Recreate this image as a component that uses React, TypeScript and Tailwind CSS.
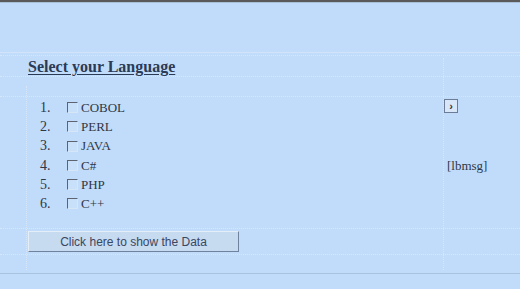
const languages = ["COBOL", "PERL", "JAVA", "C#", "PHP", "C++"];

function Check() {
  return (
    <span className="inline-block w-[11px] h-[11px] border-t border-l border-[#5d6470] border-b border-r border-b-[#d7e6f7] border-r-[#d7e6f7] bg-[#c9e0fa]" />
  );
}

export default function App() {
  return (
    <div className="w-[520px] h-[289px] bg-[#c1dcfb] overflow-hidden font-['Liberation_Serif',serif] text-[#2f3644]">
      <div className="h-[2px] bg-[#5a5a5a]" />
      <div className="h-px bg-[#aac0d8]" />
      <div className="h-[49px]" />
      <div className="h-px bg-[#d2e4f9]" />
      <div className="h-[2px]" />

      {/* title row */}
      <div className="flex h-[21px] border-t border-dotted border-[#d9e6f6]">
        <div className="w-[443px] pl-[28px] pt-[2px] flex items-start">
          <span className="text-[16px] font-bold underline underline-offset-2 text-[#2b3a55] leading-[17px]">
            Select your Language
          </span>
        </div>
        <div className="flex-1 mt-[2px] border-l border-dotted border-[#d9e6f6]" />
      </div>

      {/* spacer row */}
      <div className="flex h-[20px] border-t border-dotted border-[#d9e6f6]">
        <div className="w-[26px]" />
        <div className="w-[417px] mt-[9px] border-l border-dotted border-[#d9e6f6]" />
        <div className="flex-1 border-l border-dotted border-[#d9e6f6]" />
      </div>

      {/* list row */}
      <div className="flex h-[132px] border-t border-dotted border-[#d9e6f6]">
        <div className="w-[26px]" />
        <div className="w-[417px] border-l border-dotted border-[#d9e6f6] pt-[1px]">
          <ol className="text-[13px] leading-[19.2px]">
            {languages.map((lang, i) => (
              <li key={lang} className="flex items-center">
                <span className="w-[40px] pl-[13px] text-[14px]">{i + 1}.</span>
                <span className="w-[14px] flex items-center">
                  <Check />
                </span>
                <span>{lang}</span>
              </li>
            ))}
          </ol>
        </div>
        <div className="flex-1 border-l border-dotted border-[#d9e6f6] pt-[2px]">
          <div className="w-[14px] h-[14px] border border-[#6c7c96] bg-[#d7e6f8] flex items-center justify-center text-[11px] leading-none font-bold font-['Liberation_Sans',sans-serif] text-[#333]">
            ›
          </div>
          <div className="mt-[43px] pl-[3px] text-[13px] leading-[19px]">[lbmsg]</div>
        </div>
      </div>

      {/* button row */}
      <div className="flex h-[27px] border-t border-b border-dotted border-[#d9e6f6]">
        <div className="w-[26px]" />
        <div className="w-[417px] border-l border-dotted border-[#d9e6f6] pl-[1px] pt-[2px] flex items-start">
          <button className="w-[211px] h-[21px] bg-[#c6daf0] border border-[#e4eef9] border-r-[#6f829e] border-b-[#6f829e] font-['Liberation_Sans',sans-serif] text-[12px] text-[#3a4761] leading-none">
            Click here to show the Data
          </button>
        </div>
        <div className="flex-1 border-l border-dotted border-[#d9e6f6]" />
      </div>

      <div className="flex h-[18px]">
        <div className="w-[26px]" />
        <div className="w-[417px] mb-[3px] border-l border-dotted border-[#d9e6f6]" />
        <div className="flex-1 mb-[3px] border-l border-dotted border-[#d9e6f6]" />
      </div>
      <div className="h-px bg-[#a9c3df]" />
    </div>
  );
}
